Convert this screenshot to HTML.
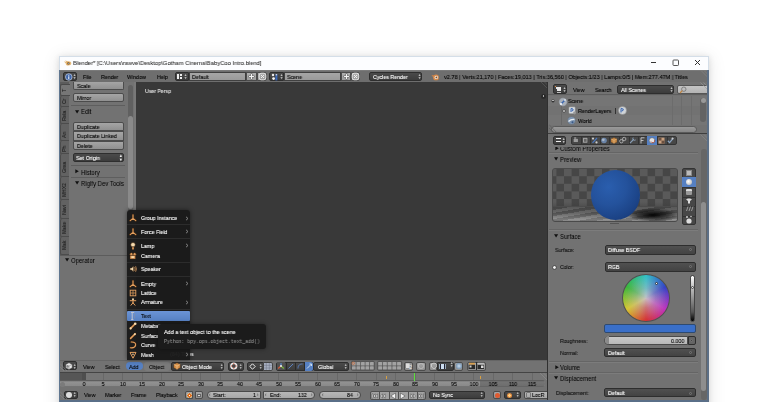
<!DOCTYPE html>
<html><head><meta charset="utf-8">
<style>
*{margin:0;padding:0;box-sizing:border-box}
html,body{width:768px;height:402px;overflow:hidden;background:#fff}
body{position:relative;font-family:"Liberation Sans",sans-serif;font-size:5.89px;color:#000}
.a{position:absolute}
.t{position:absolute;white-space:pre;line-height:1;transform:scaleX(0.900);transform-origin:0 0;will-change:transform;-webkit-text-stroke:0.1px currentColor}
.w{color:#fff}
.ph{transform:scaleX(0.82);-webkit-text-stroke:0.02px currentColor}
/* buttons */
.btn{position:absolute;background:linear-gradient(#a5a5a5,#909090);border:1px solid #4c4c4c;border-radius:2px}
.dd{position:absolute;background:linear-gradient(#4a4a4a,#3c3c3c);border:1px solid #2e2e2e;border-radius:2px}
.fld{position:absolute;background:linear-gradient(#a8a8a8,#999);border:1px solid #404040;border-radius:2px}
.sep{position:absolute;height:1px;background:#5e5e5e}
.sep2{position:absolute;height:1px;background:#858585}
</style></head><body>

<!-- window shadow + frame -->
<div class="a" style="left:59px;top:56px;width:650px;height:360px;box-shadow:0 1px 6px rgba(0,0,0,0.12),0 2px 16px 2px rgba(0,0,0,0.08);background:#5a6f88"></div>

<!-- title bar -->
<div class="a" style="left:59px;top:56px;width:650px;height:14px;background:#fcfdff;border:0.6px solid #d4dee8;border-bottom:none"></div>
<svg class="a" style="left:62.5px;top:58.5px" width="9" height="7"><path d="M0.8 2.2L3.5 3.2L2 1.5L5 2.3C6.8 2 8.3 3 8.3 4.3S7 6.6 5.2 6.6C3.6 6.6 2.6 5.6 2.8 4.5Z" fill="#e4b878"/><circle cx="5.4" cy="4.4" r="1.3" fill="#9a6a30"/><circle cx="5.6" cy="4.3" r="0.6" fill="#7aa0c0"/></svg>
<div class="t" style="left:72.5px;top:60.0px;font-size:6.2px;color:#2a2a2a;transform:scaleX(0.94);-webkit-text-stroke:0.05px #2a2a2a">Blender* [C:\Users\rawve\Desktop\Gotham Cinema\BabyCoo Intro.blend]</div>
<div class="a" style="left:651px;top:62px;width:5px;height:1px;background:#333"></div>
<svg class="a" style="left:671.5px;top:59px" width="8" height="8"><rect x="1" y="1" width="5.5" height="5.5" rx="0.8" fill="none" stroke="#444" stroke-width="0.9"/></svg>
<svg class="a" style="left:694px;top:59px" width="7" height="7"><path d="M1 1L6 6M6 1L1 6" stroke="#333" stroke-width="1"/></svg>

<!-- ================= INFO HEADER ================= -->
<div class="a" style="left:59px;top:70px;width:650px;height:12px;background:#6e6e6e;border-top:1px solid #7a7a7a"></div>
<div class="dd" style="left:63px;top:72px;width:14px;height:9px"></div>
<svg class="a" style="left:64.5px;top:72.5px" width="8" height="8"><circle cx="3.8" cy="4" r="3.3" fill="#3d64a8" stroke="#c8d4e8" stroke-width="0.7"/><path d="M3.8 3.3V6.2" stroke="#fff" stroke-width="1"/><circle cx="3.8" cy="2.2" r="0.55" fill="#fff"/></svg>
<div class="t" style="left:73px;top:73.50px;font-size:3.2px;line-height:3.2px;color:#ccc">▲<br>▼</div>
<div class="t" style="left:83px;top:75.10px">File</div>
<div class="t" style="left:101px;top:75.10px">Render</div>
<div class="t" style="left:127px;top:75.10px">Window</div>
<div class="t" style="left:156.5px;top:75.10px">Help</div>
<div class="dd" style="left:174.5px;top:72px;width:14.5px;height:9px;border-radius:2px 0 0 2px"></div>
<div class="a" style="left:176.5px;top:73.5px;width:2.6px;height:5.5px;background:#eee"></div>
<div class="a" style="left:179.6px;top:73.5px;width:2.6px;height:2.5px;background:#eee"></div>
<div class="a" style="left:179.6px;top:76.5px;width:2.6px;height:2.5px;background:#eee"></div>
<div class="t" style="left:184px;top:73.50px;font-size:3.2px;line-height:3.2px;color:#ccc">▲<br>▼</div>
<div class="fld" style="left:188.6px;top:72px;width:57.5px;height:9px;border-radius:0;background:linear-gradient(#a6a6a6,#9a9a9a)"></div>
<div class="t" style="left:192px;top:75.10px">Default</div>
<div class="btn" style="left:245.7px;top:72px;width:11px;height:9px;border-radius:0;background:linear-gradient(#b0b0b0,#9c9c9c)"></div>

<div class="btn" style="left:256.5px;top:72px;width:10.5px;height:9px;border-radius:0 2px 2px 0;background:linear-gradient(#b0b0b0,#9c9c9c)"></div>


<svg class="a" style="left:247.3px;top:72.3px" width="9" height="9"><path d="M4.5 2.2V6.8M2.2 4.5H6.8" stroke="#6a6a6a" stroke-width="2.2" stroke-linecap="round"/><path d="M4.5 2.4V6.6M2.4 4.5H6.6" stroke="#f4f4f4" stroke-width="1.1" stroke-linecap="round"/></svg><svg class="a" style="left:257.5px;top:72.2px" width="9" height="9"><rect x="1.2" y="1.2" width="6.6" height="6.6" rx="2" fill="none" stroke="#e8e8e8" stroke-width="0.9"/><path d="M3 3L6 6M6 3L3 6" stroke="#f0f0f0" stroke-width="1"/></svg>
<div class="dd" style="left:269.3px;top:72px;width:14.5px;height:9px;border-radius:2px 0 0 2px"></div>
<svg class="a" style="left:270.5px;top:72.8px" width="9" height="8"><circle cx="2" cy="2" r="1.2" fill="#eee"/><circle cx="2.6" cy="5.6" r="1.4" fill="#f4f4f4"/><rect x="4.4" y="1" width="2" height="6.4" fill="#3a68b8"/><circle cx="5.4" cy="1.8" r="0.8" fill="#ddd"/></svg>
<div class="t" style="left:279.5px;top:73.50px;font-size:3.2px;line-height:3.2px;color:#ccc">▲<br>▼</div>
<div class="fld" style="left:283.7px;top:72px;width:57.5px;height:9px;border-radius:0;background:linear-gradient(#a6a6a6,#9a9a9a)"></div>
<div class="t" style="left:287px;top:75.10px">Scene</div>
<div class="btn" style="left:341.2px;top:72px;width:10px;height:9px;border-radius:0;background:linear-gradient(#b0b0b0,#9c9c9c)"></div>

<div class="btn" style="left:351px;top:72px;width:9.3px;height:9px;border-radius:0 2px 2px 0;background:linear-gradient(#b0b0b0,#9c9c9c)"></div>


<svg class="a" style="left:342.3px;top:72.3px" width="9" height="9"><path d="M4.5 2.2V6.8M2.2 4.5H6.8" stroke="#6a6a6a" stroke-width="2.2" stroke-linecap="round"/><path d="M4.5 2.4V6.6M2.4 4.5H6.6" stroke="#f4f4f4" stroke-width="1.1" stroke-linecap="round"/></svg><svg class="a" style="left:351.4px;top:72.2px" width="9" height="9"><rect x="1.2" y="1.2" width="6.6" height="6.6" rx="2" fill="none" stroke="#e8e8e8" stroke-width="0.9"/><path d="M3 3L6 6M6 3L3 6" stroke="#f0f0f0" stroke-width="1"/></svg>
<div class="dd" style="left:368.8px;top:72px;width:53.2px;height:9px"></div>
<div class="t w" style="left:372.5px;top:75.10px">Cycles Render</div>
<div class="t" style="left:417.5px;top:73.50px;font-size:3.2px;line-height:3.2px;color:#ccc">▲<br>▼</div>
<svg class="a" style="left:431px;top:72.5px" width="9" height="8"><path d="M0.8 2.6L3.8 3.3" stroke="#c88048" stroke-width="1.2"/><circle cx="5" cy="4.4" r="2.9" fill="#d88a4a"/><circle cx="5.3" cy="4.4" r="1.7" fill="#f4efe8"/><circle cx="5.4" cy="4.4" r="0.9" fill="#7a5030"/></svg>
<div class="t" style="left:443.5px;top:74.2px;font-size:6.19px">v2.78 | Verts:21,170 | Faces:19,013 | Tris:36,560 | Objects:1/23 | Lamps:0/5 | Mem:277.47M | Titles</div>
<svg class="a" style="left:700px;top:70px" width="9" height="12"><path d="M1 0.5L8.5 8" stroke="#888" stroke-width="0.6"/><path d="M4 0.5L8.5 5" stroke="#888" stroke-width="0.6"/></svg>

<!-- ================= 3D VIEW ================= -->
<div class="a" style="left:59px;top:82px;width:489px;height:278px;background:#393939"></div>
<svg class="a" style="left:540px;top:82px" width="8" height="8"><path d="M1 0L8 7M4.5 0L8 3.5" stroke="#5a5a5a" stroke-width="0.7"/></svg>
<div class="a" style="left:541px;top:93.5px;width:5px;height:5px;border-radius:50%;background:#2a2a2a"></div><div class="a" style="left:542.8px;top:95.3px;width:1.5px;height:1.5px;background:#aaa"></div>
<div class="t" style="left:145px;top:89.00px;color:#e6e6e6;font-size:5.78px">User Persp</div>

<!-- tool shelf -->
<div class="a" style="left:59px;top:82px;width:77px;height:173.3px;background:#727272"></div>
<div class="a" style="left:59px;top:82px;width:10px;height:173.3px;background:#5c5c5c"></div>
<!-- tabs -->
<div class="a" style="left:60px;top:84.4px;width:9.5px;height:11.3px;background:#767676;border:0.8px solid #4a4a4a;border-right:none;border-radius:2px 0 0 2px"></div>
<div class="a" style="left:60px;top:95.7px;width:9px;height:11.3px;background:#626262;border-bottom:0.8px solid #4c4c4c;border-left:0.8px solid #4c4c4c;border-radius:2px 0 0 2px"></div>
<div class="a" style="left:60px;top:107px;width:9px;height:16.6px;background:#626262;border-bottom:0.8px solid #4c4c4c;border-left:0.8px solid #4c4c4c;border-radius:2px 0 0 2px"></div>
<div class="a" style="left:60px;top:123.6px;width:9px;height:17.4px;background:#626262;border-bottom:0.8px solid #4c4c4c;border-left:0.8px solid #4c4c4c;border-radius:2px 0 0 2px"></div>
<div class="a" style="left:60px;top:141px;width:9px;height:13.0px;background:#626262;border-bottom:0.8px solid #4c4c4c;border-left:0.8px solid #4c4c4c;border-radius:2px 0 0 2px"></div>
<div class="a" style="left:60px;top:154px;width:9px;height:22.6px;background:#626262;border-bottom:0.8px solid #4c4c4c;border-left:0.8px solid #4c4c4c;border-radius:2px 0 0 2px"></div>
<div class="a" style="left:60px;top:176.6px;width:9px;height:23.5px;background:#626262;border-bottom:0.8px solid #4c4c4c;border-left:0.8px solid #4c4c4c;border-radius:2px 0 0 2px"></div>
<div class="a" style="left:60px;top:200.1px;width:9px;height:18.6px;background:#626262;border-bottom:0.8px solid #4c4c4c;border-left:0.8px solid #4c4c4c;border-radius:2px 0 0 2px"></div>
<div class="a" style="left:60px;top:218.7px;width:9px;height:18.3px;background:#626262;border-bottom:0.8px solid #4c4c4c;border-left:0.8px solid #4c4c4c;border-radius:2px 0 0 2px"></div>
<div class="a" style="left:60px;top:237px;width:9px;height:18.3px;background:#626262;border-bottom:0.8px solid #4c4c4c;border-left:0.8px solid #4c4c4c;border-radius:2px 0 0 2px"></div>
<div class="t" style="left:61.8px;top:91.53px;font-size:5.56px;color:#1e1e1e;transform:rotate(-90deg) scaleX(0.900);transform-origin:0 0">T</div>
<div class="t" style="left:61.8px;top:104.44px;font-size:5.56px;color:#1e1e1e;transform:rotate(-90deg) scaleX(0.900);transform-origin:0 0">Cr</div>
<div class="t" style="left:61.8px;top:120.84px;font-size:5.56px;color:#1e1e1e;transform:rotate(-90deg) scaleX(0.900);transform-origin:0 0">Rela</div>
<div class="t" style="left:61.8px;top:137.96px;font-size:5.56px;color:#1e1e1e;transform:rotate(-90deg) scaleX(0.900);transform-origin:0 0">An</div>
<div class="t" style="left:61.8px;top:151.76px;font-size:5.56px;color:#1e1e1e;transform:rotate(-90deg) scaleX(0.900);transform-origin:0 0">Ph</div>
<div class="t" style="left:61.8px;top:172.55px;font-size:5.56px;color:#1e1e1e;transform:rotate(-90deg) scaleX(0.900);transform-origin:0 0">Grea</div>
<div class="t" style="left:61.8px;top:196.54px;font-size:5.56px;color:#1e1e1e;transform:rotate(-90deg) scaleX(0.900);transform-origin:0 0">MHX2</div>
<div class="t" style="left:61.8px;top:215.00px;font-size:5.56px;color:#1e1e1e;transform:rotate(-90deg) scaleX(0.900);transform-origin:0 0">Navi</div>
<div class="t" style="left:61.8px;top:233.61px;font-size:5.56px;color:#1e1e1e;transform:rotate(-90deg) scaleX(0.900);transform-origin:0 0">Make</div>
<div class="t" style="left:61.8px;top:250.42px;font-size:5.56px;color:#1e1e1e;transform:rotate(-90deg) scaleX(0.900);transform-origin:0 0">Mak</div>
<!-- buttons -->
<div class="btn" style="left:72.5px;top:82px;width:51px;height:7.5px;border-top:none;border-radius:0 0 2px 2px"></div>
<div class="t" style="left:76.5px;top:82.5px;font-size:6.00px">Scale</div>
<div class="btn" style="left:72.5px;top:93px;width:51px;height:8.5px"></div>
<div class="t" style="left:76.5px;top:95px;font-size:6.00px">Mirror</div>
<div class="sep" style="left:71px;top:105px;width:53.5px;background:#5e5e5e"></div>
<svg class="a" style="left:74.6px;top:109.50px" width="5" height="4"><path d="M0 0.2H4.2L2.1 3.6Z" fill="#111"/></svg><div class="t ph" style="left:80.8px;top:108.40px;font-size:7.33px">Edit</div>
<div class="btn" style="left:72.5px;top:122px;width:51px;height:9px;border-radius:2px 2px 0 0"></div>
<div class="t" style="left:76.5px;top:124px;font-size:6.00px">Duplicate</div>
<div class="btn" style="left:72.5px;top:130.5px;width:51px;height:10.5px;border-radius:0"></div>
<div class="t" style="left:76.5px;top:132.50px;font-size:6.00px">Duplicate Linked</div>
<div class="btn" style="left:72.5px;top:140.5px;width:51px;height:9.5px;border-radius:0 0 2px 2px"></div>
<div class="t" style="left:76.5px;top:142.50px;font-size:6.00px">Delete</div>
<div class="dd" style="left:72.5px;top:153px;width:51px;height:9px"></div>
<div class="t w" style="left:76px;top:154.50px;font-size:6.00px">Set Origin</div>
<div class="t w" style="left:118.5px;top:154px;font-size:3.89px;line-height:3.5px">▲<br>▼</div>
<div class="sep" style="left:71px;top:165px;width:53.5px;background:#5e5e5e"></div>
<svg class="a" style="left:74.8px;top:169.40px" width="5" height="5"><path d="M0.3 0.2L3.8 2.2L0.3 4.2Z" fill="#111"/></svg><div class="t ph" style="left:80.8px;top:168.60px;font-size:7.33px">History</div>
<div class="sep" style="left:71px;top:176.8px;width:53.5px;background:#5e5e5e"></div>
<svg class="a" style="left:74.6px;top:181.10px" width="5" height="4"><path d="M0 0.2H4.2L2.1 3.6Z" fill="#111"/></svg><div class="t ph" style="left:80.8px;top:180.00px;font-size:7.33px">Rigify Dev Tools</div>
<!-- scrollbar -->
<div class="a" style="left:127.5px;top:85px;width:5.5px;height:127px;border-radius:3px;background:#606060"></div>
<div class="a" style="left:128px;top:116px;width:4.5px;height:93px;border-radius:2.5px;background:#8a8a8a"></div>
<div class="a" style="left:134px;top:82px;width:2px;height:172.5px;background:#787878"></div>

<!-- operator region -->
<div class="a" style="left:59px;top:255.3px;width:77px;height:104.5px;background:#727272;border-top:0.8px solid #5c5c5c"></div>

<svg class="a" style="left:65.2px;top:258.40px" width="5" height="4"><path d="M0 0.2H4.2L2.1 3.6Z" fill="#111"/></svg><div class="t ph" style="left:71.1px;top:257.30px;font-size:7.33px">Operator</div>
<div class="a" style="left:134px;top:254.5px;width:2px;height:105px;background:#787878"></div>

<!-- ================= 3D VIEW HEADER ================= -->
<div class="a" style="left:59px;top:359.6px;width:489px;height:12.4px;background:#727272;border-top:0.8px solid #656565"></div>
<div class="dd" style="left:63.2px;top:361.2px;width:14.3px;height:9.1px"></div>
<svg class="a" style="left:64.5px;top:362.3px" width="8" height="8"><path d="M4 0.8L7.2 2.4V5.8L4 7.4L0.8 5.8V2.4Z" fill="#e8e8e8" stroke="#444" stroke-width="0.4"/><path d="M4 4V7.4M4 4L7.2 2.4" stroke="#777" stroke-width="0.5" fill="none"/><circle cx="2.6" cy="4.4" r="1.3" fill="#888"/></svg>
<div class="t" style="left:73px;top:363.50px;font-size:3.56px;line-height:3.2px;color:#bbb">▲<br>▼</div>
<div class="t" style="left:83.4px;top:364.50px">View</div>
<div class="t" style="left:104.9px;top:364.50px">Select</div>
<div class="a" style="left:125.7px;top:361.5px;width:17px;height:8.8px;border-radius:4px;background:#5680c2"></div>
<div class="t" style="left:129px;top:364.50px">Add</div>
<div class="a" style="left:143.5px;top:361.6px;width:26.5px;height:9.2px;border-radius:3px;background:#7a7a7a"></div>
<div class="t" style="left:148.6px;top:364.50px">Object</div>
<div class="dd" style="left:171.25px;top:361.5px;width:53.2px;height:9px"></div>
<svg class="a" style="left:172.8px;top:362.3px" width="8" height="8"><path d="M4 0.8L7.2 2.4V5.8L4 7.4L0.8 5.8V2.4Z" fill="#d89048" stroke="#4a2a10" stroke-width="0.4"/><path d="M0.8 2.4L4 4L7.2 2.4M4 4V7.4" stroke="#f4d0a0" stroke-width="0.6" fill="none"/></svg>
<div class="t w" style="left:182px;top:364.50px">Object Mode</div>
<div class="t" style="left:219.5px;top:363.80px;font-size:3.56px;line-height:3.2px;color:#bbb">▲<br>▼</div>
<div class="dd" style="left:227.5px;top:361.5px;width:16.5px;height:9px"></div>
<svg class="a" style="left:229.5px;top:362.3px" width="8" height="8"><circle cx="3.8" cy="4" r="2.8" fill="none" stroke="#eee" stroke-width="1.6"/><path d="M3.8 1.2V2.5M3.8 5.5V6.8M1 4H2.3M5.3 4H6.6" stroke="#d05a40" stroke-width="1"/></svg>
<div class="t" style="left:239px;top:363.80px;font-size:3.56px;line-height:3.2px;color:#bbb">▲<br>▼</div>
<div class="dd" style="left:247px;top:361.5px;width:16.5px;height:9px;border-radius:2px 0 0 2px"></div>
<svg class="a" style="left:249px;top:362.5px" width="7" height="7"><path d="M3.5 0.8L6.2 3.5L3.5 6.2L0.8 3.5Z" fill="none" stroke="#eee" stroke-width="1"/></svg>
<div class="t" style="left:258.5px;top:363.80px;font-size:3.56px;line-height:3.2px;color:#bbb">▲<br>▼</div>
<div class="a" style="left:263.4px;top:361.5px;width:9.5px;height:9px;border-radius:0 2px 2px 0;background:#a8b0c0;border:0.8px solid #444"></div><svg class="a" style="left:263.4px;top:361.5px" width="10" height="9"><path d="M3.3 1V8M6.3 1V8M1 3.3H8.8M1 6H8.8" stroke="#6a7080" stroke-width="0.5"/></svg>
<div class="dd" style="left:276px;top:361.5px;width:37.5px;height:9px"></div>
<div class="a" style="left:276.5px;top:362px;width:8.7px;height:8px;background:#505050"></div>
<svg class="a" style="left:277px;top:362px" width="8" height="8"><path d="M4 4V1" stroke="#5a8ad8" stroke-width="1.1"/><path d="M4 4L1.2 6.5" stroke="#d85a3a" stroke-width="1.1"/><path d="M4 4L6.8 6.5" stroke="#7ab83a" stroke-width="1.1"/><circle cx="4" cy="4" r="1" fill="#eee"/></svg>
<div class="a" style="left:285.8px;top:362px;width:1px;height:8px;background:#2a2a2a"></div>
<div class="a" style="left:295px;top:362px;width:1px;height:8px;background:#2a2a2a"></div>
<div class="a" style="left:304.2px;top:362px;width:1px;height:8px;background:#2a2a2a"></div>
<svg class="a" style="left:286px;top:362px" width="28" height="8"><path d="M2.5 6.5L7 2M12 6.5C12 3 14 2 16.5 2" stroke="#5a7fbf" stroke-width="1" fill="none"/></svg>
<div class="a" style="left:304.7px;top:361.5px;width:8.8px;height:9px;background:#5680c2;border-radius:0 2px 2px 0"></div>
<svg class="a" style="left:305px;top:362px" width="9" height="8"><path d="M2 6.5L6.5 2M4.5 2H6.5V4" stroke="#cde" stroke-width="1" fill="none"/></svg>
<div class="dd" style="left:313.4px;top:361.5px;width:35.2px;height:9px"></div>
<div class="t w" style="left:318px;top:364.50px">Global</div>
<div class="t" style="left:343.5px;top:363.80px;font-size:3.56px;line-height:3.2px;color:#bbb">▲<br>▼</div>
<!-- layers -->
<svg class="a" style="left:350px;top:360px" width="54" height="12" viewBox="0 0 54 12"><rect x="1.1" y="1.1" width="23.5" height="9.4" rx="1.8" fill="#5c5c5c" stroke="#4a4a4a" stroke-width="0.5"/><rect x="2.00" y="2.00" width="3.70" height="3.4" rx="0.5" fill="#a2a2a2"/><rect x="6.50" y="2.00" width="3.70" height="3.4" rx="0.5" fill="#a2a2a2"/><rect x="11.00" y="2.00" width="3.70" height="3.4" rx="0.5" fill="#a2a2a2"/><rect x="15.50" y="2.00" width="3.70" height="3.4" rx="0.5" fill="#a2a2a2"/><rect x="20.00" y="2.00" width="3.70" height="3.4" rx="0.5" fill="#a2a2a2"/><rect x="2.00" y="6.20" width="3.70" height="3.4" rx="0.5" fill="#a2a2a2"/><rect x="6.50" y="6.20" width="3.70" height="3.4" rx="0.5" fill="#a2a2a2"/><rect x="11.00" y="6.20" width="3.70" height="3.4" rx="0.5" fill="#a2a2a2"/><rect x="15.50" y="6.20" width="3.70" height="3.4" rx="0.5" fill="#a2a2a2"/><rect x="20.00" y="6.20" width="3.70" height="3.4" rx="0.5" fill="#a2a2a2"/><rect x="27.3" y="1.1" width="24.6" height="9.4" rx="1.8" fill="#5c5c5c" stroke="#4a4a4a" stroke-width="0.5"/><rect x="28.20" y="2.00" width="3.92" height="3.4" rx="0.5" fill="#a2a2a2"/><rect x="32.92" y="2.00" width="3.92" height="3.4" rx="0.5" fill="#a2a2a2"/><rect x="37.64" y="2.00" width="3.92" height="3.4" rx="0.5" fill="#a2a2a2"/><rect x="42.36" y="2.00" width="3.92" height="3.4" rx="0.5" fill="#a2a2a2"/><rect x="47.08" y="2.00" width="3.92" height="3.4" rx="0.5" fill="#a2a2a2"/><rect x="28.20" y="6.20" width="3.92" height="3.4" rx="0.5" fill="#a2a2a2"/><rect x="32.92" y="6.20" width="3.92" height="3.4" rx="0.5" fill="#a2a2a2"/><rect x="37.64" y="6.20" width="3.92" height="3.4" rx="0.5" fill="#a2a2a2"/><rect x="42.36" y="6.20" width="3.92" height="3.4" rx="0.5" fill="#a2a2a2"/><rect x="47.08" y="6.20" width="3.92" height="3.4" rx="0.5" fill="#a2a2a2"/><circle cx="3.3" cy="3.3" r="1.2" fill="none" stroke="#c86a3a" stroke-width="0.8"/></svg>
<div class="btn" style="left:404.4px;top:361.5px;width:8.8px;height:9px"></div>
<svg class="a" style="left:405px;top:362.3px" width="8" height="8"><rect x="0.8" y="1" width="4.2" height="5.5" fill="#ddd" stroke="#555" stroke-width="0.4"/><text x="4.2" y="7.2" font-family="Liberation Sans" font-size="5" fill="#eee">2</text></svg>
<div class="btn" style="left:416px;top:361.5px;width:9.5px;height:9px"></div>
<div class="a" style="left:418px;top:363px;width:5.5px;height:5.5px;border-radius:50%;border:1px solid #bbb"></div>
<div class="btn" style="left:428.6px;top:361.5px;width:8.8px;height:9px;border-radius:2px 0 0 2px"></div><svg class="a" style="left:429.5px;top:362.3px" width="8" height="8"><path d="M1.5 2L4 1L6.5 2V5L4 6.8L1.5 5Z" fill="none" stroke="#d8d8d8" stroke-width="0.7"/></svg>
<div class="dd" style="left:437.2px;top:361.5px;width:17px;height:9px;border-radius:0 2px 2px 0"></div>
<div class="a" style="left:439px;top:363.5px;width:7px;height:5px;background:linear-gradient(90deg,#9ab 0 20%,#223 20% 30%,#cde 30% 70%,#223 70% 80%,#9ab 80%)"></div>
<div class="t" style="left:449.5px;top:362.3px;font-size:3.56px;line-height:3.2px;color:#bbb">▲<br>▼</div>
<div class="btn" style="left:454.2px;top:361.5px;width:9.2px;height:9px"></div>
<div class="a" style="left:456px;top:363px;width:5.5px;height:5.5px;border-radius:50%;background:radial-gradient(#cde,#579)"></div>
<div class="btn" style="left:466.6px;top:361.5px;width:19px;height:9px"></div>
<svg class="a" style="left:467.5px;top:362.3px" width="8" height="8"><rect x="0.5" y="2.5" width="6.5" height="4.5" fill="#2a2a2a"/><rect x="1" y="0.8" width="6" height="1.8" fill="#d8a050"/><rect x="1.5" y="3.5" width="2" height="2" fill="#ccc"/></svg>
<div class="a" style="left:476px;top:362px;width:1px;height:8px;background:#2a2a2a"></div>
<svg class="a" style="left:477px;top:362.3px" width="8" height="8"><rect x="0.5" y="2.5" width="6.5" height="4.5" fill="#2a2a2a"/><rect x="1" y="0.8" width="6" height="1.8" fill="#bbb"/><rect x="4" y="3.5" width="2.5" height="2.5" fill="#ddd"/></svg>


<!-- ================= TIMELINE ================= -->
<div class="a" style="left:59px;top:372px;width:489px;height:30px;background:#727272;border-top:1px solid #444"></div>
<div class="a" style="left:59px;top:373px;width:489px;height:7.3px;background:#757575"></div><div class="a" style="left:59px;top:373px;width:27px;height:7.3px;background:#565656"></div><div class="a" style="left:82.2px;top:373px;width:3.6px;height:7.3px;background:#4e4e4e"></div><div class="a" style="left:102.5px;top:373px;width:1px;height:7.3px;background:#686868"></div><div class="a" style="left:122.0px;top:373px;width:1px;height:7.3px;background:#686868"></div><div class="a" style="left:141.5px;top:373px;width:1px;height:7.3px;background:#686868"></div><div class="a" style="left:161.0px;top:373px;width:1px;height:7.3px;background:#686868"></div><div class="a" style="left:180.5px;top:373px;width:1px;height:7.3px;background:#686868"></div><div class="a" style="left:200.0px;top:373px;width:1px;height:7.3px;background:#686868"></div><div class="a" style="left:219.5px;top:373px;width:1px;height:7.3px;background:#686868"></div><div class="a" style="left:239.0px;top:373px;width:1px;height:7.3px;background:#686868"></div><div class="a" style="left:258.5px;top:373px;width:1px;height:7.3px;background:#686868"></div><div class="a" style="left:278.0px;top:373px;width:1px;height:7.3px;background:#686868"></div><div class="a" style="left:297.5px;top:373px;width:1px;height:7.3px;background:#686868"></div><div class="a" style="left:317.0px;top:373px;width:1px;height:7.3px;background:#686868"></div><div class="a" style="left:336.5px;top:373px;width:1px;height:7.3px;background:#686868"></div><div class="a" style="left:356.0px;top:373px;width:1px;height:7.3px;background:#686868"></div><div class="a" style="left:375.5px;top:373px;width:1px;height:7.3px;background:#686868"></div><div class="a" style="left:395.0px;top:373px;width:1px;height:7.3px;background:#686868"></div><div class="a" style="left:414.5px;top:373px;width:1px;height:7.3px;background:#686868"></div><div class="a" style="left:434.0px;top:373px;width:1px;height:7.3px;background:#686868"></div><div class="a" style="left:453.5px;top:373px;width:1px;height:7.3px;background:#686868"></div><div class="a" style="left:473.0px;top:373px;width:1px;height:7.3px;background:#686868"></div><div class="a" style="left:492.5px;top:373px;width:1px;height:7.3px;background:#686868"></div><div class="a" style="left:512.0px;top:373px;width:1px;height:7.3px;background:#686868"></div><div class="a" style="left:531.5px;top:373px;width:1px;height:7.3px;background:#686868"></div><svg class="a" style="left:539px;top:372.5px" width="9" height="8"><path d="M1 0L9 8M4.5 0L9 4.5" stroke="#8e8e8e" stroke-width="0.6"/></svg>
<div class="a" style="left:59px;top:380.4px;width:486px;height:6.6px;background:linear-gradient(#5e5e5e 0 12%,#929292 25%,#8a8a8a 80%,#666 100%);border-radius:0 3.2px 3.2px 0"></div>
<div class="a" style="left:479.5px;top:380.4px;width:65.5px;height:6.6px;background:linear-gradient(#5e5e5e 0 12%,#747474 25%,#6e6e6e 80%,#5e5e5e 100%);border-radius:0 3.2px 3.2px 0"></div>
<div class="a" style="left:59.5px;top:381.5px;width:5px;height:5px;border-radius:50%;background:#7b7b7b"></div>
<div class="a" style="left:413.6px;top:372.5px;width:1.2px;height:8px;background:#5ce03a"></div>
<div class="a" style="left:385.5px;top:375.5px;width:1px;height:3px;background:#d8a040"></div>
<div class="a" style="left:480.3px;top:375.5px;width:1px;height:3px;background:#d8a040"></div>
<div class="t" style="left:74.50px;top:381.5px;width:20px;text-align:center;font-size:5.78px">0</div>
<div class="t" style="left:94.00px;top:381.5px;width:20px;text-align:center;font-size:5.78px">5</div>
<div class="t" style="left:113.50px;top:381.5px;width:20px;text-align:center;font-size:5.78px">10</div>
<div class="t" style="left:133.00px;top:381.5px;width:20px;text-align:center;font-size:5.78px">15</div>
<div class="t" style="left:152.50px;top:381.5px;width:20px;text-align:center;font-size:5.78px">20</div>
<div class="t" style="left:172.00px;top:381.5px;width:20px;text-align:center;font-size:5.78px">25</div>
<div class="t" style="left:191.50px;top:381.5px;width:20px;text-align:center;font-size:5.78px">30</div>
<div class="t" style="left:211.00px;top:381.5px;width:20px;text-align:center;font-size:5.78px">35</div>
<div class="t" style="left:230.50px;top:381.5px;width:20px;text-align:center;font-size:5.78px">40</div>
<div class="t" style="left:250.00px;top:381.5px;width:20px;text-align:center;font-size:5.78px">45</div>
<div class="t" style="left:269.50px;top:381.5px;width:20px;text-align:center;font-size:5.78px">50</div>
<div class="t" style="left:289.00px;top:381.5px;width:20px;text-align:center;font-size:5.78px">55</div>
<div class="t" style="left:308.50px;top:381.5px;width:20px;text-align:center;font-size:5.78px">60</div>
<div class="t" style="left:328.00px;top:381.5px;width:20px;text-align:center;font-size:5.78px">65</div>
<div class="t" style="left:347.50px;top:381.5px;width:20px;text-align:center;font-size:5.78px">70</div>
<div class="t" style="left:367.00px;top:381.5px;width:20px;text-align:center;font-size:5.78px">75</div>
<div class="t" style="left:386.50px;top:381.5px;width:20px;text-align:center;font-size:5.78px">80</div>
<div class="t" style="left:406.00px;top:381.5px;width:20px;text-align:center;font-size:5.78px">85</div>
<div class="t" style="left:425.50px;top:381.5px;width:20px;text-align:center;font-size:5.78px">90</div>
<div class="t" style="left:445.00px;top:381.5px;width:20px;text-align:center;font-size:5.78px">95</div>
<div class="t" style="left:464.50px;top:381.5px;width:20px;text-align:center;font-size:5.78px">100</div>
<div class="t" style="left:484.00px;top:381.5px;width:20px;text-align:center;font-size:5.78px">105</div>
<div class="t" style="left:503.50px;top:381.5px;width:20px;text-align:center;font-size:5.78px">110</div>
<div class="t" style="left:523.00px;top:381.5px;width:20px;text-align:center;font-size:5.78px">115</div>

<!-- timeline header -->
<div class="a" style="left:59px;top:387.5px;width:489px;height:14.5px;background:#727272"></div>
<div class="dd" style="left:63.5px;top:390.7px;width:14px;height:8.6px"></div>
<div class="a" style="left:65.5px;top:392px;width:6px;height:6px;border-radius:50%;background:#ddd"></div>
<div class="t" style="left:73px;top:392.20px;font-size:3.56px;line-height:3.2px;color:#bbb">▲<br>▼</div>
<div class="t" style="left:83.8px;top:393.00px">View</div>
<div class="t" style="left:104.9px;top:393.00px">Marker</div>
<div class="t" style="left:131.4px;top:393.00px">Frame</div>
<div class="t" style="left:156.4px;top:393.00px">Playback</div>
<div class="btn" style="left:184.8px;top:390.7px;width:8px;height:8.6px;border-radius:2px 0 0 2px"></div>
<div class="a" style="left:186.5px;top:392.5px;width:5px;height:5px;border-radius:50%;background:radial-gradient(#fff 0 0.8px,#e07020 1px 2px,#f0c080 2.2px)"></div>
<div class="btn" style="left:194.8px;top:390.7px;width:8px;height:8.6px;border-radius:0 2px 2px 0"></div>
<div class="a" style="left:196.8px;top:393.5px;width:4px;height:3.5px;background:#ddd;border:0.6px solid #666"></div>
<div class="a" style="left:206.7px;top:390.7px;width:54.7px;height:8.6px;border-radius:4.3px 0 0 4.3px;background:linear-gradient(#b8b8b8,#a8a8a8);border:1px solid #4a4a4a"></div>
<div class="t" style="left:208.5px;top:392.80px;color:#555;font-size:4.44px">‹</div>
<div class="t" style="left:213px;top:393.00px">Start:</div>
<div class="t" style="left:252.5px;top:393.00px">1</div>
<div class="t" style="left:257px;top:392.80px;color:#555;font-size:4.44px">›</div>
<div class="a" style="left:262.8px;top:390.7px;width:52.4px;height:8.6px;border-radius:0 4.3px 4.3px 0;background:linear-gradient(#b8b8b8,#a8a8a8);border:1px solid #4a4a4a"></div>
<div class="t" style="left:264.5px;top:392.80px;color:#555;font-size:4.44px">‹</div>
<div class="t" style="left:269.8px;top:393.00px">End:</div>
<div class="t" style="left:298px;top:393.00px">132</div>
<div class="t" style="left:311px;top:392.80px;color:#555;font-size:4.44px">›</div>
<div class="a" style="left:319px;top:390.7px;width:42.3px;height:8.6px;border-radius:4.3px;background:linear-gradient(#b8b8b8,#a8a8a8);border:1px solid #4a4a4a"></div>
<div class="t" style="left:321.5px;top:392.80px;color:#555;font-size:4.44px">‹</div>
<div class="t" style="left:347px;top:393.00px">84</div>
<div class="t" style="left:357px;top:392.80px;color:#555;font-size:4.44px">›</div>
<div class="a" style="left:369.7px;top:390.6px;width:56.3px;height:9.2px;border-radius:2px;background:repeating-linear-gradient(90deg,#a2a2a2 0 8.4px,#505050 8.4px 9.38px);border:0.8px solid #505050"></div>
<svg class="a" style="left:369.7px;top:390.6px" width="57" height="10" viewBox="0 0 57 10">
 <g fill="#f4f4f4" stroke="#3a3a3a" stroke-width="0.5" stroke-linejoin="round">
  <path d="M1.8 2.8h1.2v4.4h-1.2zM5.2 2.8L3.2 5L5.2 7.2zM7.6 2.8L5.6 5L7.6 7.2z"/>
  <path d="M12.6 2.8L10.6 5L12.6 7.2zM15 2.8L13 5L15 7.2z"/>
  <path d="M25.5 2L20.8 5L25.5 8z"/>
  <path d="M30.4 2L35.1 5L30.4 8z"/>
  <path d="M41 2.8L43 5L41 7.2zM43.4 2.8L45.4 5L43.4 7.2z"/>
  <path d="M48.8 2.8L50.8 5L48.8 7.2zM51.2 2.8L53.2 5L51.2 7.2zM53.5 2.8h1.2v4.4h-1.2z"/>
 </g>
</svg>
<div class="dd" style="left:429px;top:390.7px;width:55.5px;height:8.6px"></div>
<div class="t w" style="left:433px;top:393.00px">No Sync</div>
<div class="t" style="left:479.5px;top:392.20px;font-size:3.56px;line-height:3.2px;color:#bbb">▲<br>▼</div>
<div class="btn" style="left:492.7px;top:390.7px;width:8.6px;height:8.6px"></div>
<div class="a" style="left:494.5px;top:392.5px;width:5px;height:5px;border-radius:50%;background:#e05a30"></div>
<div class="dd" style="left:504.4px;top:390.7px;width:16.4px;height:8.6px"></div>
<div class="a" style="left:506.5px;top:392.5px;width:5px;height:5px;border-radius:50%;background:radial-gradient(#ffd080 0 1.2px,#e08a40 1.5px)"></div>
<div class="t" style="left:515.5px;top:392.20px;font-size:3.56px;line-height:3.2px;color:#bbb">▲<br>▼</div>
<div class="a" style="left:524px;top:390.7px;width:30px;height:8.6px;border-radius:2px;background:linear-gradient(#b8b8b8,#a8a8a8);border:1px solid #4a4a4a"></div>
<div class="a" style="left:526px;top:392px;width:5px;height:6px;border:0.8px solid #777;border-radius:1px"></div>
<div class="t" style="left:532px;top:393.00px">LocR</div>


<!-- ================= OUTLINER ================= -->
<div class="a" style="left:547px;top:82px;width:162px;height:320px;background:#303030"></div>
<div class="a" style="left:548px;top:82px;width:160.5px;height:51px;background:#727272"></div>
<div class="a" style="left:548px;top:82px;width:160.5px;height:13px;background:#727272;border-bottom:1px solid #5f5f5f"></div>
<div class="dd" style="left:552.5px;top:84px;width:14.4px;height:9.7px"></div>
<div class="a" style="left:554.5px;top:85.5px;width:1.8px;height:1.8px;background:#e08a40"></div>
<div class="a" style="left:555.5px;top:87px;width:5.5px;height:1.6px;background:#e8e8e8"></div>
<div class="a" style="left:556.5px;top:89.4px;width:4.5px;height:1.6px;background:#e8e8e8"></div>
<div class="a" style="left:556.5px;top:91.6px;width:4.5px;height:1.2px;background:#bbb"></div>
<div class="t" style="left:562.5px;top:87.10px;font-size:3.2px;line-height:3.2px;color:#ccc">▲<br>▼</div>
<div class="t" style="left:573px;top:88.00px">View</div>
<div class="t" style="left:595px;top:88.00px">Search</div>
<div class="dd" style="left:616.8px;top:84.8px;width:57.5px;height:9px"></div>
<div class="t w" style="left:621px;top:88.20px">All Scenes</div>
<div class="t" style="left:670px;top:86.60px;font-size:3.2px;line-height:3.2px;color:#ccc">▲<br>▼</div>
<div class="a" style="left:677px;top:84.5px;width:32px;height:9.5px;border-radius:2px 0 0 2px;background:linear-gradient(#c4c4c4,#b4b4b4);border:1px solid #555"></div>
<svg class="a" style="left:679px;top:85.5px" width="8" height="8"><circle cx="4.8" cy="3.2" r="2.2" fill="none" stroke="#777" stroke-width="0.9"/><path d="M3.3 4.7L1 7" stroke="#c0803a" stroke-width="1.1"/></svg>
<svg class="a" style="left:700px;top:82px" width="9" height="12"><path d="M0.5 0.5L8.5 8.5" stroke="#999" stroke-width="0.6"/><path d="M3.5 0.5L8.5 5.5" stroke="#999" stroke-width="0.6"/></svg>
<!-- rows -->
<div class="a" style="left:548px;top:96px;width:160.5px;height:9.6px;background:#757575"></div>
<div class="a" style="left:548px;top:115.2px;width:160.5px;height:9.6px;background:#757575"></div>
<div class="a" style="left:672px;top:96px;width:1px;height:29px;background:#6c6c6c"></div>
<div class="a" style="left:681px;top:96px;width:1px;height:29px;background:#6c6c6c"></div>
<div class="a" style="left:690.5px;top:96px;width:1px;height:29px;background:#6c6c6c"></div>
<div class="a" style="left:550.5px;top:99.3px;width:4px;height:4px;border-radius:50%;background:#d8d8d8;border:0.6px solid #555"></div>
<div class="a" style="left:551.5px;top:101.1px;width:2px;height:0.6px;background:#333"></div>
<svg class="a" style="left:558px;top:96.5px" width="10" height="10"><circle cx="5" cy="5" r="4.2" fill="#a8b0ba" stroke="#777" stroke-width="0.5"/><path d="M2.5 7.5L7.5 2.5" stroke="#3a66b0" stroke-width="1.4"/><circle cx="3" cy="7" r="1.1" fill="#fff"/><circle cx="7" cy="3" r="1" fill="#e8e8e8"/></svg>
<div class="t" style="left:567.6px;top:99.3px">Scene</div>
<div class="a" style="left:561.3px;top:106px;width:0.8px;height:19px;background:#686868"></div>
<div class="a" style="left:562.2px;top:108.8px;width:4px;height:4px;border-radius:50%;background:#c8c8c8;border:0.6px solid #555"></div>
<svg class="a" style="left:567.5px;top:106.3px" width="9" height="9"><rect x="0.8" y="0.8" width="6.5" height="7" rx="1" fill="#d8dce0" stroke="#777" stroke-width="0.5"/><path d="M3 6V2.5Q6 2.5 5 4.5L3.5 5" stroke="#3a66b0" stroke-width="1" fill="none"/><circle cx="6.5" cy="7" r="1.4" fill="#999"/></svg>
<div class="t" style="left:577.8px;top:108.7px">RenderLayers</div>
<div class="a" style="left:615.2px;top:107.5px;width:0.8px;height:6px;background:#333"></div>
<svg class="a" style="left:618px;top:106.3px" width="9" height="9"><circle cx="4.5" cy="4.5" r="4" fill="#d0d4d8" stroke="#888" stroke-width="0.5"/><path d="M3 6.5V2.5Q6.5 2.5 5 4.5L3.5 5" stroke="#3a66b0" stroke-width="1" fill="none"/></svg>
<svg class="a" style="left:567px;top:116px" width="9" height="9"><circle cx="4.5" cy="4.5" r="4" fill="#7d94b0" stroke="#666" stroke-width="0.5"/><path d="M1.5 5.5Q4 3 7.5 3.5" stroke="#e8eef4" stroke-width="1.3" fill="none"/><circle cx="5.5" cy="6.3" r="1" fill="#3a5a88"/></svg>
<div class="t" style="left:577.8px;top:118.70px">World</div>
<div class="a" style="left:550.5px;top:125.8px;width:146.5px;height:6.9px;border-radius:3.5px;background:linear-gradient(#9a9a9a,#868686);border:0.8px solid #5a5a5a"></div>
<div class="a" style="left:700.3px;top:97.8px;width:6.1px;height:24.6px;border-radius:3px;background:#636363"></div>
<div class="a" style="left:700.8px;top:98.3px;width:5px;height:5px;border-radius:50%;background:#999"></div>

<svg class="a" style="left:548.5px;top:124px" width="8" height="9"><path d="M0 0.5L7.5 8.5M0 4L4.5 8.5" stroke="#5a5a5a" stroke-width="0.6"/></svg>
<!-- ================= PROPERTIES ================= -->
<div class="a" style="left:548px;top:133px;width:160.5px;height:269px;background:#727272;border-top:1px solid #3e3e3e"></div>
<svg class="a" style="left:554.5px;top:145.50px" width="5" height="5"><path d="M0.3 0.2L3.8 2.2L0.3 4.2Z" fill="#111"/></svg><div class="t ph" style="left:560px;top:144.70px;font-size:7.33px">Custom Properties</div>
<div class="a" style="left:548px;top:134px;width:160.5px;height:12.5px;background:#727272"></div>
<div class="dd" style="left:553.3px;top:135.7px;width:13.1px;height:8.9px"></div>
<div class="a" style="left:555.5px;top:137.5px;width:5px;height:1.8px;background:#eee"></div>
<div class="a" style="left:555.5px;top:140.5px;width:5px;height:1.8px;background:#eee"></div>
<div class="t" style="left:562px;top:137.5px;font-size:3.56px;line-height:3.2px;color:#ccc">▲<br>▼</div>
<div class="a" style="left:571px;top:135.7px;width:105.6px;height:8.9px;border-radius:2px;background:repeating-linear-gradient(90deg,#474747 0 8.6px,#333 8.6px 9.6px);border:1px solid #333"></div>
<div class="a" style="left:647.3px;top:135.7px;width:10px;height:8.9px;background:#5680c2"></div>
<svg class="a" style="left:571px;top:136px" width="106" height="9" viewBox="0 0 106 9">
 <rect x="2.2" y="2.5" width="5" height="3.8" fill="#9a9a9a" stroke="#333" stroke-width="0.5"/><rect x="3.2" y="1.5" width="2" height="1" fill="#bbb"/>
 <rect x="11.8" y="1.5" width="5" height="5.5" fill="#a8a8a8" stroke="#333" stroke-width="0.5"/><rect x="13" y="2.8" width="2.6" height="3" fill="#666"/>
 <path d="M21.5 6.8L26 2" stroke="#4a78c0" stroke-width="1.2"/><circle cx="22" cy="2.6" r="1.1" fill="#ccc"/><circle cx="25.5" cy="6.4" r="1.1" fill="#ccc"/>
 <circle cx="33" cy="4.5" r="2.8" fill="#6a84a8"/><circle cx="32.3" cy="3.8" r="1.4" fill="#aab8c8"/>
 <path d="M40 3L43 1.6L46 3V6.2L43 7.6L40 6.2Z" fill="#c88a48" stroke="#5a3a1a" stroke-width="0.4"/><path d="M40 3L43 4.3L46 3M43 4.3V7.6" stroke="#f0c890" stroke-width="0.5" fill="none"/>
 <circle cx="50.3" cy="5.2" r="1.7" fill="none" stroke="#bbb" stroke-width="0.8"/><circle cx="53.2" cy="3" r="1.7" fill="none" stroke="#bbb" stroke-width="0.8"/>
 <path d="M59 7.2L63 3" stroke="#8aa0b8" stroke-width="1.1"/><path d="M62.2 1.5A1.6 1.6 0 1 0 64.8 3.8" stroke="#8aa0b8" stroke-width="0.8" fill="none"/>
 <path d="M70 1.8H73.5M70 1.8V7.5M70 4.5H72.5" stroke="#c8c8c8" stroke-width="0.9" fill="none"/>
 <circle cx="81" cy="4.5" r="2.8" fill="#e4e4e4" stroke="#444" stroke-width="0.4"/><path d="M80 5.5A1.8 1.8 0 0 0 83.5 4.2" stroke="#b05040" stroke-width="0.9" fill="none"/>
 <rect x="87.5" y="1.6" width="6" height="6" fill="#c8a080"/><rect x="87.5" y="1.6" width="3" height="3" fill="#6a5040"/><rect x="90.5" y="4.6" width="3" height="3" fill="#6a5040"/>
 <path d="M96.8 4.8L98.6 6.6L102.3 2.2" stroke="#8aa4c0" stroke-width="1.3" fill="none"/><circle cx="101.5" cy="2.5" r="1" fill="#ccc"/>
</svg>
<svg class="a" style="left:700px;top:133.5px" width="9" height="10"><path d="M0.5 0.5L8.5 8.5M4 0.5L8.5 5" stroke="#8a8a8a" stroke-width="0.6"/></svg>
<div class="sep" style="left:549px;top:151.5px;width:149px;background:#656565"></div>
<div class="a" style="left:549px;top:152.5px;width:149px;height:1px;background:#7c7c7c"></div>
<svg class="a" style="left:554.3px;top:156.70px" width="5" height="4"><path d="M0 0.2H4.2L2.1 3.6Z" fill="#111"/></svg><div class="t ph" style="left:560px;top:155.60px;font-size:7.33px">Preview</div>
<!-- preview image -->
<div class="a" style="left:552px;top:168px;width:125.5px;height:54px;border-radius:3px;overflow:hidden;background:#555;border:0.6px solid #4a4a4a">
  <div class="a" style="left:0;top:0;width:126px;height:40px;background:conic-gradient(#464646 25%,#5a5a5a 0 50%,#464646 0 75%,#5a5a5a 0);background-size:15.2px 15.2px;background-position:-4.2px -0.4px"></div>
  <div class="a" style="left:0;top:33px;width:126px;height:7px;background:linear-gradient(rgba(60,60,60,0),rgba(60,60,60,0.6))"></div>
  <div class="a" style="left:0;top:37px;width:126px;height:17px;background:linear-gradient(#4a4a4a,#5a5a5a 40%,#8a8a8a 80%,#6a6a6a)"></div>
  <div class="a" style="left:0;top:38px;width:126px;height:15px;background:repeating-linear-gradient(170deg,rgba(0,0,0,0.12) 0 3px,rgba(255,255,255,0.07) 3px 6px)"></div>
  <div class="a" style="left:58px;top:36px;width:68px;height:17px;background:radial-gradient(ellipse 26px 7px at 42px 10px,rgba(0,0,0,0.95),rgba(0,0,0,0.5) 60%,rgba(0,0,0,0) 100%)"></div>
  <div class="a" style="left:37.6px;top:1.2px;width:49.6px;height:50px;border-radius:50%;background:radial-gradient(circle at 36% 34%,#2a5eae 0%,#24529c 40%,#1b4285 72%,#112a5c 100%)"></div>
</div>
<div class="a" style="left:610px;top:223px;width:9px;height:1px;background:#555"></div>
<div class="a" style="left:682.3px;top:167.8px;width:13.4px;height:57.5px;border-radius:2px;background:repeating-linear-gradient(#474747 0 8.6px,#333 8.6px 9.58px);border:1px solid #333"></div>
<div class="a" style="left:682.3px;top:177.4px;width:13.4px;height:9.6px;background:#5680c2"></div>
<div class="a" style="left:686px;top:170px;width:6px;height:6px;background:#bbb;border:0.6px solid #888"></div>
<div class="a" style="left:686px;top:179.3px;width:6px;height:6px;border-radius:50%;background:radial-gradient(circle at 40% 40%,#fff,#aaa)"></div>
<div class="a" style="left:686px;top:189px;width:6px;height:6px;background:linear-gradient(#ddd 40%,#999 40%);border-radius:1px"></div>
<svg class="a" style="left:683px;top:196px" width="12" height="29"><path d="M3 3.5C4 2 8 2 9 3.5L7 5V7.5H5V5Z" fill="#ddd"/><path d="M3.5 15L5 10.5M6 15L7.5 10.5M8.5 15L10 10.5" stroke="#bbb" stroke-width="0.7"/><circle cx="6" cy="25" r="2.6" fill="#ddd"/><circle cx="4" cy="21" r="1" fill="#ccc"/><circle cx="8" cy="20.5" r="0.8" fill="#ccc"/></svg>
<div class="sep" style="left:549px;top:228.7px;width:149px;background:#656565"></div>
<div class="a" style="left:549px;top:229.7px;width:149px;height:1px;background:#7c7c7c"></div>
<svg class="a" style="left:554.3px;top:233.80px" width="5" height="4"><path d="M0 0.2H4.2L2.1 3.6Z" fill="#111"/></svg><div class="t ph" style="left:560px;top:232.70px;font-size:7.33px">Surface</div>
<div class="t" style="left:555.4px;top:248.00px;font-size:5.78px;color:#111">Surface:</div>
<div class="dd" style="left:604.5px;top:245.2px;width:91px;height:9.4px;background:linear-gradient(#505050,#434343)"></div>
<div class="t w" style="left:608px;top:247.5px">Diffuse BSDF</div>
<div class="a" style="left:689px;top:248px;width:3px;height:3px;border-radius:50%;background:#444;border:0.5px solid #777"></div>
<div class="a" style="left:551.8px;top:264.8px;width:5px;height:5px;border-radius:50%;background:radial-gradient(circle at 40% 40%,#fff,#bbb);border:0.5px solid #555"></div>
<div class="t" style="left:560px;top:265.40px;font-size:5.78px;color:#111">Color:</div>
<div class="dd" style="left:604.5px;top:262.4px;width:91px;height:9.2px;background:linear-gradient(#505050,#434343)"></div>
<div class="t w" style="left:608px;top:265.40px">RGB</div>
<div class="a" style="left:689px;top:265px;width:3px;height:3px;border-radius:50%;background:#444;border:0.5px solid #777"></div>
<!-- color wheel -->
<div class="a" style="left:621.5px;top:274.2px;width:48px;height:48.3px;border-radius:50%;background:radial-gradient(circle,rgba(200,195,200,0.95) 0%,rgba(190,185,190,0.5) 30%,rgba(180,180,180,0.1) 65%,rgba(180,180,180,0) 80%),conic-gradient(from 180deg,#d82828,#d8c828,#30b830,#28c0c8,#2838c8,#c028c0,#d82828);border:0.7px solid #505050"></div>
<div class="a" style="left:654.5px;top:282.2px;width:3px;height:3px;border-radius:50%;background:#fff;border:0.5px solid #333"></div>
<div class="a" style="left:689.6px;top:274.6px;width:5.9px;height:47px;border-radius:3px;background:linear-gradient(#fff,#ccc 20%,#555 80%,#000);border:0.6px solid #444"></div>
<div class="a" style="left:690.6px;top:285.5px;width:3.8px;height:3.8px;border-radius:50%;border:0.8px solid #444;background:#eee"></div>
<div class="a" style="left:604px;top:323.6px;width:91.8px;height:9px;border-radius:2px;background:#3a6fc8;border:0.8px solid #2e4a70"></div>
<div class="t" style="left:559.6px;top:338.5px;font-size:5.78px;color:#111">Roughness:</div>
<div class="a" style="left:604px;top:335.8px;width:84px;height:8.9px;border-radius:4.4px 0 0 4.4px;background:linear-gradient(#c8c8c8,#b8b8b8);border:0.8px solid #4a4a4a"></div>
<div class="a" style="left:604.5px;top:336.3px;width:4px;height:8px;border-radius:4px 0 0 4px;background:#8a8a8a"></div>
<div class="t" style="left:670.5px;top:338.5px">0.000</div>
<div class="dd" style="left:687.5px;top:335.8px;width:8.3px;height:8.9px;border-radius:0 2px 2px 0;background:#646464"></div>
<div class="a" style="left:690px;top:339px;width:3px;height:3px;border-radius:50%;background:#444;border:0.5px solid #777"></div>
<div class="t" style="left:559.6px;top:351.30px;font-size:5.78px;color:#111">Normal:</div>
<div class="dd" style="left:604px;top:348.3px;width:91.8px;height:8.6px;background:linear-gradient(#505050,#434343)"></div>
<div class="t w" style="left:608px;top:351.30px">Default</div>
<div class="a" style="left:689px;top:351px;width:3px;height:3px;border-radius:50%;background:#444;border:0.5px solid #777"></div>
<div class="sep" style="left:549px;top:361.3px;width:149px;background:#656565"></div>
<div class="a" style="left:549px;top:362.3px;width:149px;height:1px;background:#7c7c7c"></div>
<svg class="a" style="left:554.5px;top:365.00px" width="5" height="5"><path d="M0.3 0.2L3.8 2.2L0.3 4.2Z" fill="#111"/></svg><div class="t ph" style="left:560px;top:364.20px;font-size:7.33px">Volume</div>
<div class="sep" style="left:549px;top:372.2px;width:149px;background:#656565"></div>
<div class="a" style="left:549px;top:373.2px;width:149px;height:1px;background:#7c7c7c"></div>
<svg class="a" style="left:554.3px;top:376.30px" width="5" height="4"><path d="M0 0.2H4.2L2.1 3.6Z" fill="#111"/></svg><div class="t ph" style="left:560px;top:375.20px;font-size:7.33px">Displacement</div>
<div class="t" style="left:555.7px;top:390.5px;font-size:5.78px;color:#111">Displacement:</div>
<div class="dd" style="left:604px;top:388.3px;width:91.8px;height:9px;background:linear-gradient(#505050,#434343)"></div>
<div class="t w" style="left:608px;top:390.5px">Default</div>
<div class="a" style="left:689px;top:391.5px;width:3px;height:3px;border-radius:50%;background:#444;border:0.5px solid #777"></div>
<!-- props scrollbar -->
<div class="a" style="left:700.5px;top:148.6px;width:6px;height:251px;border-radius:3px;background:#666"></div>
<div class="a" style="left:701px;top:201.8px;width:5px;height:189px;border-radius:2.5px;background:#8e8e8e"></div>

<div class="a" style="left:59px;top:400.2px;width:650px;height:2px;background:#5a6f88"></div>
<div class="a" style="left:59px;top:70px;width:1px;height:332px;background:#5f7690"></div>
<div class="a" style="left:706.8px;top:70px;width:2.2px;height:332px;background:#5c6f86"></div>
<svg class="a" style="left:60px;top:360px" width="8" height="12"><path d="M0 3.5L7 11M0 7L4 11" stroke="#8a8a8a" stroke-width="0.6"/></svg>
<svg class="a" style="left:60px;top:388px" width="8" height="12"><path d="M0 3.5L7 11M0 7L4 11" stroke="#8a8a8a" stroke-width="0.6"/></svg>
<!-- ================= ADD MENU ================= -->
<div class="t" style="left:169.5px;top:351.3px;color:#fff;font-size:6.00px">(84) Titles</div>
<div class="a" style="left:126.8px;top:209.7px;width:63.5px;height:150.8px;background:rgba(26,26,26,0.965);border-radius:3px 3px 0 0;box-shadow:0 0 4px rgba(0,0,0,0.5)"></div>
<div class="a" style="left:127px;top:224px;width:63px;height:1px;background:#2c2c2c"></div>
<div class="a" style="left:127px;top:238px;width:63px;height:1px;background:#2c2c2c"></div>
<div class="a" style="left:127px;top:262px;width:63px;height:1px;background:#2c2c2c"></div>
<div class="a" style="left:127px;top:275.5px;width:63px;height:1px;background:#2c2c2c"></div>
<div class="a" style="left:127px;top:308.5px;width:63px;height:1px;background:#2c2c2c"></div>
<div class="a" style="left:126.8px;top:311px;width:63.5px;height:9.5px;background:linear-gradient(#6b94d6,#5680c2);border-radius:1px"></div>
<div class="t w" style="left:140.7px;top:216.00px">Group Instance</div>
<div class="t w" style="left:140.7px;top:229.70px">Force Field</div>
<div class="t w" style="left:140.7px;top:243.50px">Lamp</div>
<div class="t w" style="left:140.7px;top:253.50px">Camera</div>
<div class="t w" style="left:140.7px;top:267.20px">Speaker</div>
<div class="t w" style="left:140.7px;top:281.60px">Empty</div>
<div class="t w" style="left:140.7px;top:291.00px">Lattice</div>
<div class="t w" style="left:140.7px;top:300.40px">Armature</div>
<div class="t" style="left:140.7px;top:314.00px;color:#000">Text</div>
<div class="t w" style="left:140.7px;top:324.20px">Metaball</div>
<div class="t w" style="left:140.7px;top:333.50px">Surface</div>
<div class="t w" style="left:140.7px;top:342.90px">Curve</div>
<div class="t w" style="left:140.7px;top:352.80px">Mesh</div>
<svg class="a" style="left:185.3px;top:215.50px" width="4" height="5"><path d="M1 0.8L3 2.5L1 4.2" stroke="#9a9a9a" stroke-width="0.8" fill="none"/></svg>
<svg class="a" style="left:185.3px;top:229.20px" width="4" height="5"><path d="M1 0.8L3 2.5L1 4.2" stroke="#9a9a9a" stroke-width="0.8" fill="none"/></svg>
<svg class="a" style="left:185.3px;top:243.00px" width="4" height="5"><path d="M1 0.8L3 2.5L1 4.2" stroke="#9a9a9a" stroke-width="0.8" fill="none"/></svg>
<svg class="a" style="left:185.3px;top:281.10px" width="4" height="5"><path d="M1 0.8L3 2.5L1 4.2" stroke="#9a9a9a" stroke-width="0.8" fill="none"/></svg>
<svg class="a" style="left:185.3px;top:299.90px" width="4" height="5"><path d="M1 0.8L3 2.5L1 4.2" stroke="#9a9a9a" stroke-width="0.8" fill="none"/></svg>
<svg class="a" style="left:185.3px;top:352.30px" width="4" height="5"><path d="M1 0.8L3 2.5L1 4.2" stroke="#9a9a9a" stroke-width="0.8" fill="none"/></svg>
<!-- menu icons -->
<svg class="a" style="left:128px;top:213.0px" width="10" height="10" viewBox="-5 -5 10 10"><g stroke="#3a2410" stroke-width="2.2" stroke-linecap="round" fill="none"><path d="M0 -3.2V0.3M0 0.3L-2.8 2.6M0 0.3L2.8 2.6"/></g><g stroke="#e4a060" stroke-width="1.1" stroke-linecap="round" fill="none"><path d="M0 -3.2V0.3M0 0.3L-2.8 2.6M0 0.3L2.8 2.6"/></g></svg>
<svg class="a" style="left:128px;top:226.7px" width="10" height="10" viewBox="-5 -5 10 10"><g stroke="#3a2410" stroke-width="2.2" stroke-linecap="round" fill="none"><path d="M0 -3.2V0.3M0 0.3L-2.8 2.6M0 0.3L2.8 2.6"/></g><g stroke="#e4a060" stroke-width="1.1" stroke-linecap="round" fill="none"><path d="M0 -3.2V0.3M0 0.3L-2.8 2.6M0 0.3L2.8 2.6"/></g></svg>
<svg class="a" style="left:128px;top:240.5px" width="10" height="10" viewBox="-5 -5 10 10"><circle cx="0" cy="-1.2" r="2.3" fill="#f6dcb0" stroke="#3a2410" stroke-width="0.6"/><rect x="-1" y="1" width="2" height="2.6" fill="#e4a060" stroke="#3a2410" stroke-width="0.4"/></svg>
<svg class="a" style="left:128px;top:250.5px" width="10" height="10" viewBox="-5 -5 10 10"><circle cx="-1.6" cy="-1.8" r="1.5" fill="#e4a060" stroke="#3a2410" stroke-width="0.5"/><circle cx="1.6" cy="-1.8" r="1.5" fill="#e4a060" stroke="#3a2410" stroke-width="0.5"/><rect x="-3" y="-0.6" width="5.5" height="3.6" rx="0.5" fill="#e4a060" stroke="#3a2410" stroke-width="0.5"/><rect x="-1.5" y="0.2" width="2.4" height="1.8" fill="#f6dcb0"/></svg>
<svg class="a" style="left:128px;top:264.2px" width="10" height="10" viewBox="-5 -5 10 10"><path d="M-3 -1h1.6l2 -2v6l-2 -2h-1.6z" fill="#f6dcb0" stroke="#3a2410" stroke-width="0.5"/><path d="M1.6 -1.8Q2.8 0 1.6 1.8M2.6 -2.8Q4.3 0 2.6 2.8" stroke="#e4a060" stroke-width="0.7" fill="none"/></svg>
<svg class="a" style="left:128px;top:278.6px" width="10" height="10" viewBox="-5 -5 10 10"><g stroke="#3a2410" stroke-width="2.2" stroke-linecap="round" fill="none"><path d="M0 -3.2V0.3M0 0.3L-2.8 2.6M0 0.3L2.8 2.6"/></g><g stroke="#e4a060" stroke-width="1.1" stroke-linecap="round" fill="none"><path d="M0 -3.2V0.3M0 0.3L-2.8 2.6M0 0.3L2.8 2.6"/></g></svg>
<svg class="a" style="left:128px;top:288.0px" width="10" height="10" viewBox="-5 -5 10 10"><rect x="-2.8" y="-2.8" width="5.6" height="5.6" fill="none" stroke="#e4a060" stroke-width="0.9"/><path d="M0 -2.8V2.8M-2.8 0H2.8" stroke="#e4a060" stroke-width="0.7"/></svg>
<svg class="a" style="left:128px;top:297.4px" width="10" height="10" viewBox="-5 -5 10 10"><g stroke="#e4a060" stroke-width="1" stroke-linecap="round" fill="none"><path d="M-2.8 -1.3H2.8M0 -1.8V0.8M0 0.8L-2 3.2M0 0.8L2 3.2"/></g><circle cx="0" cy="-2.8" r="1" fill="#f6dcb0"/></svg>
<svg class="a" style="left:128px;top:311.0px" width="10" height="10" viewBox="-5 -5 10 10"><path d="M-2 -3.6H1.2M-0.8 -3.6V3.6M-1.8 3.6H0.4" stroke="#c0c4d0" stroke-width="1" fill="none"/><path d="M1.6 -2.5V2.5" stroke="#8a90a0" stroke-width="0.6"/></svg>
<svg class="a" style="left:128px;top:321.2px" width="10" height="10" viewBox="-5 -5 10 10"><path d="M-2.4 2.4L2.2 -2.2" stroke="#3a2410" stroke-width="2.4" stroke-linecap="round"/><path d="M-2.4 2.4L2.2 -2.2" stroke="#e4a060" stroke-width="1.5" stroke-linecap="round"/><circle cx="2.2" cy="-2.2" r="1.3" fill="#f6dcb0"/><circle cx="-2.4" cy="2.4" r="1.1" fill="#f6dcb0"/></svg>
<svg class="a" style="left:128px;top:330.5px" width="10" height="10" viewBox="-5 -5 10 10"><path d="M-2.4 2.4L2.2 -2.2" stroke="#3a2410" stroke-width="2.4" stroke-linecap="round"/><path d="M-2.4 2.4L2.2 -2.2" stroke="#e4a060" stroke-width="1.5" stroke-linecap="round"/><circle cx="1.8" cy="-1.8" r="1" fill="#f6dcb0"/></svg>
<svg class="a" style="left:128px;top:339.9px" width="10" height="10" viewBox="-5 -5 10 10"><path d="M-1.8 -3C1.6 -3.2 3 -1.6 2.6 0.2S0 3.2 -2.6 2.8" stroke="#3a2410" stroke-width="2" fill="none" stroke-linecap="round"/><path d="M-1.8 -3C1.6 -3.2 3 -1.6 2.6 0.2S0 3.2 -2.6 2.8" stroke="#e4a060" stroke-width="1.1" fill="none" stroke-linecap="round"/></svg>
<svg class="a" style="left:128px;top:349.8px" width="10" height="10" viewBox="-5 -5 10 10"><path d="M-3 -2.6H3L0 3.2Z" fill="none" stroke="#e4a060" stroke-width="1" stroke-linejoin="round"/><circle cx="0" cy="-0.8" r="0.8" fill="#f6dcb0"/></svg>

<!-- tooltip -->
<div class="a" style="left:157.5px;top:323.5px;width:108.5px;height:25px;background:#1b1b1b;border-radius:3px;box-shadow:0 0 4px rgba(0,0,0,0.4)"></div>
<div class="t w" style="left:163.7px;top:328.8px;font-size:6.06px">Add a text object to the scene</div>
<div class="t" style="left:163.7px;top:339.80px;font-family:'Liberation Mono',monospace;font-size:5.39px;color:#8a8a8a">Python: bpy.ops.object.text_add()</div>
</body></html>
